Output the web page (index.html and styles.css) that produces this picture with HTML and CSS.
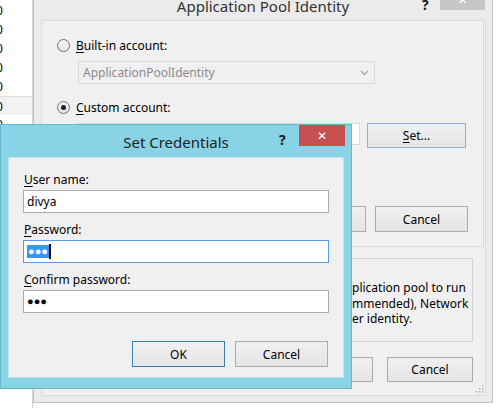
FILE: index.html
```html
<!DOCTYPE html>
<html lang="en">
  <head>
    <meta charset="UTF-8" />
    <title>Set Credentials</title>
    <link rel="stylesheet" href="styles.css">
  </head>
  <body>
    <div class="desktop">

      <!-- List behind the dialogs -->
      <div class="site-list">
        <div class="site-row">0</div>
        <div class="site-row">0</div>
        <div class="site-row">0</div>
        <div class="site-row">0</div>
        <div class="site-row">0</div>
        <div class="site-row selected">0</div>
        <div class="site-row">0</div>
        <div class="site-row">0</div>
      </div>

      <!-- Application Pool Identity (inactive) -->
      <div class="window app-window">
        <div class="titlebar">
          <span class="title">Application Pool Identity</span>
          <span class="help">?</span>
          <span class="close">&#x2715;</span>
        </div>
        <div class="client">
          <div class="identity-panel">
            <label class="radio-row"><span class="radio"></span><span><u>B</u>uilt-in account:</span></label>
            <div class="combo">
              <span>ApplicationPoolIdentity</span>
              <svg width="9" height="6" viewBox="0 0 9 6"><polyline points="1,1 4.5,4.5 8,1" fill="none" stroke="#a0a0a0" stroke-width="1.2"/></svg>
            </div>
            <label class="radio-row"><span class="radio checked"></span><span><u>C</u>ustom account:</span></label>
            <div class="account-row">
              <div class="textbox account-box"></div>
              <button class="btn btn-default btn-set"><u>S</u>et...</button>
            </div>
            <div class="panel-buttons">
              <button class="btn btn-panel">OK</button>
              <button class="btn btn-panel">Cancel</button>
            </div>
          </div>

          <div class="description">
            <div class="desc-line"><span class="desc-cut">Select the account for the ap</span>plication pool to run</div>
            <div class="desc-line"><span class="desc-cut">as: ApplicationPoolIdentity (reco</span>mmended), Network</div>
            <div class="desc-line"><span class="desc-cut">Service, or a custom us</span>er identity.</div>
          </div>

          <div class="dialog-buttons">
            <button class="btn btn-dialog">OK</button>
            <button class="btn btn-dialog">Cancel</button>
          </div>

          <svg class="grip" width="8" height="8" viewBox="0 0 8 8">
            <rect x="6" y="0" width="1.5" height="1.5" fill="#b5b5b5"/>
            <rect x="3" y="3" width="1.5" height="1.5" fill="#b5b5b5"/>
            <rect x="6" y="3" width="1.5" height="1.5" fill="#b5b5b5"/>
            <rect x="0" y="6" width="1.5" height="1.5" fill="#b5b5b5"/>
            <rect x="3" y="6" width="1.5" height="1.5" fill="#b5b5b5"/>
            <rect x="6" y="6" width="1.5" height="1.5" fill="#b5b5b5"/>
          </svg>
        </div>
      </div>

      <!-- Set Credentials (active) -->
      <div class="window cred-dialog">
        <div class="titlebar">
          <span class="title">Set Credentials</span>
          <span class="help">?</span>
          <span class="close">&#x2715;</span>
        </div>
        <div class="client">
          <div class="field">
            <div class="field-label"><u>U</u>ser name:</div>
            <div class="textbox">divya</div>
          </div>
          <div class="field">
            <div class="field-label"><u>P</u>assword:</div>
            <div class="textbox focused"><span class="selection dots">&#9679;&#9679;&#9679;</span><span class="caret"></span></div>
          </div>
          <div class="field">
            <div class="field-label"><u>C</u>onfirm password:</div>
            <div class="textbox"><span class="dots">&#9679;&#9679;&#9679;</span></div>
          </div>
          <div class="cred-buttons">
            <button class="btn btn-default btn-dialog-lg">OK</button>
            <button class="btn btn-dialog-lg">Cancel</button>
          </div>
        </div>
      </div>

    </div>
  </body>
</html>
```

FILE: styles.css
```css
body {
  margin: 0;
  font-family: "Noto Sans", "Open Sans", sans-serif;
  font-size: 12px;
  color: #000;
  background: #fff;
}

.desktop {
  position: relative;
  width: 500px;
  height: 408px;
  overflow: hidden;
  background: #fff;
}

u {
  text-decoration-thickness: 1px;
  text-underline-offset: 2px;
}

/* List on the left */
.site-list {
  width: 33px;
  height: 408px;
  padding-top: 1px;
  box-sizing: border-box;
  border-right: 1px solid #d4d4d4;
  background: #fff;
}

.site-row {
  height: 19px;
  line-height: 19px;
  text-indent: -4px;
  overflow: hidden;
}

.site-row.selected {
  background: #f2f2f2;
  border-top: 1px solid #dedede;
  height: 18px;
}

/* Windows */
.window {
  position: absolute;
  box-sizing: border-box;
  display: flex;
  flex-direction: column;
}

.titlebar {
  position: relative;
  display: flex;
  justify-content: center;
  align-items: center;
  flex-shrink: 0;
}

.title {
  font-size: 15px;
  color: #222;
}

.help {
  position: absolute;
  font-weight: bold;
  font-size: 14px;
  color: #1a1a1a;
}

.close {
  position: absolute;
  top: 0;
  display: flex;
  justify-content: center;
  align-items: center;
  color: #fff;
  font-size: 12px;
  font-weight: bold;
  font-family: "DejaVu Sans", sans-serif;
}

/* Application Pool Identity */
.app-window {
  left: 33px;
  top: -12px;
  width: 460px;
  height: 415px;
  background: #ebebeb;
  border: 1px solid #c4c4c4;
}

.app-window .titlebar {
  height: 31px;
}

.app-window .title {
  color: #333;
  margin-top: 2px;
}

.app-window .help {
  left: 388px;
  top: 6px;
}

.app-window .close {
  right: 7px;
  width: 45px;
  height: 21px;
  background: #c7c7c7;
}

.app-window .client {
  position: relative;
  flex: 1;
  margin: 0 6px 6px 7px;
  background: #f0f0f0;
  border: 1px solid #dcdcdc;
}

.identity-panel {
  margin-right: 1px;
  padding: 16px 15px 14px 15px;
  border-right: 1px solid #dcdcdc;
  border-bottom: 1px solid #dcdcdc;
  display: flex;
  flex-direction: column;
}

.radio-row {
  display: flex;
  align-items: center;
  gap: 6px;
  height: 16px;
}

.radio {
  width: 11px;
  height: 11px;
  border: 1px solid #707070;
  border-radius: 50%;
  background: linear-gradient(#f4f4f4, #e6e6e6);
  display: flex;
  justify-content: center;
  align-items: center;
}

.radio.checked::after {
  content: "";
  width: 5px;
  height: 5px;
  border-radius: 50%;
  background: #222;
}

.combo {
  margin: 8px 0 15px 21px;
  width: 297px;
  height: 23px;
  box-sizing: border-box;
  border: 1px solid #d9d9d9;
  background: #f0f0f0;
  color: #8a8a8a;
  display: flex;
  align-items: center;
  justify-content: space-between;
  padding: 0 5px 0 4px;
}

.account-row {
  margin: 8px 0 0 21px;
  display: flex;
  align-items: flex-start;
  gap: 7px;
}

.textbox {
  height: 23px;
  box-sizing: border-box;
  border: 1px solid #abadb3;
  background: #fff;
  display: flex;
  align-items: center;
  padding-left: 3px;
}

.account-box {
  width: 282px;
  height: 22px;
  border-color: #d9d9d9;
}

.btn {
  font: inherit;
  color: #000;
  padding: 0;
  height: 25px;
  box-sizing: border-box;
  border: 1px solid #acacac;
  background: linear-gradient(#f0f0f0, #e5e5e5);
}

.btn-default {
  border-color: #3c7fb1;
}

.btn-set {
  width: 99px;
  border-color: #7eb4ea;
}

.panel-buttons {
  margin-top: 58px;
  display: flex;
  justify-content: flex-end;
  gap: 9px;
}

.btn-panel {
  width: 93px;
  height: 26px;
}

.description {
  margin: 11px 12px 0 10px;
  height: 84px;
  box-sizing: border-box;
  border: 1px solid #d5d5d5;
  padding: 21px 0 0 9px;
  line-height: 15.5px;
}

.desc-line {
  white-space: nowrap;
}

.desc-cut {
  display: inline-block;
  width: 290px;
  text-align: right;
}

.dialog-buttons {
  margin: 15px 12px 0 0;
  display: flex;
  justify-content: flex-end;
  gap: 14px;
}

.btn-dialog {
  width: 86px;
}

.grip {
  position: absolute;
  right: 1px;
  bottom: 2px;
}

/* Set Credentials */
.cred-dialog {
  left: 0;
  top: 124px;
  width: 352px;
  height: 265px;
  background: #88d3e5;
  border: 1px solid #66b8cc;
}

.cred-dialog .titlebar {
  height: 32px;
}

.cred-dialog .title {
  margin-top: 1px;
}

.cred-dialog .help {
  left: 278px;
  top: 5px;
}

.cred-dialog .close {
  right: 6px;
  width: 46px;
  height: 21px;
  background: #c75050;
}

.cred-dialog .client {
  flex: 1;
  margin: 0 7px 10px 7px;
  background: #f0f0f0;
  border: 1px solid #b9e3ee;
  padding: 14px 13px 0 14px;
  display: flex;
  flex-direction: column;
}

.field {
  margin-bottom: 9px;
}

.field-label {
  line-height: 15px;
  margin-bottom: 3px;
  padding-left: 1px;
}

.field .textbox {
  width: 306px;
}

.textbox.focused {
  border-color: #569de5;
}

.dots {
  font-family: "Liberation Sans", sans-serif;
  font-size: 11px;
  line-height: 13px;
}

.selection {
  background: #3399ff;
  color: #fff;
  padding: 0 1px;
}

.caret {
  width: 2px;
  height: 15px;
  background: #000;
}

.cred-buttons {
  margin-top: 19px;
  display: flex;
  justify-content: flex-end;
  gap: 10px;
  padding-right: 2px;
}

.btn-dialog-lg {
  width: 93px;
  height: 26px;
}
```
